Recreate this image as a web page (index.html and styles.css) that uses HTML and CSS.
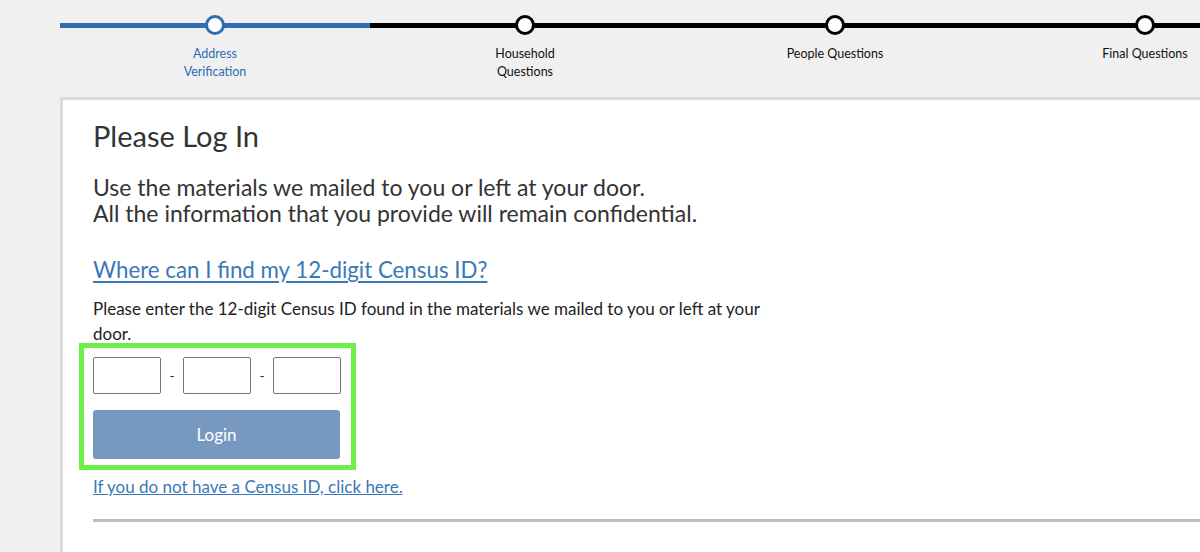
FILE: index.html
```html
<!DOCTYPE html>
<html lang="en">
<head>
<meta charset="utf-8">
<title>Please Log In</title>
<link rel="stylesheet" href="styles.css">
</head>
<body>
<nav class="progress">
  <div class="step done">
    <div class="track"><span class="dot"></span></div>
    <div class="label">Address Verification</div>
  </div>
  <div class="step">
    <div class="track"><span class="dot"></span></div>
    <div class="label">Household Questions</div>
  </div>
  <div class="step">
    <div class="track"><span class="dot"></span></div>
    <div class="label">People Questions</div>
  </div>
  <div class="step">
    <div class="track"><span class="dot"></span></div>
    <div class="label">Final Questions</div>
  </div>
</nav>
<main class="card">
  <h1 class="title">Please Log In</h1>
  <p class="intro">Use the materials we mailed to you or left at your door.<br>All the information that you provide will remain confidential.</p>
  <a class="help-link" href="#">Where can I find my 12-digit Census ID?</a>
  <p class="instructions">Please enter the 12-digit Census ID found in the materials we mailed to you or left at your door.</p>
  <div class="login-box">
    <div class="id-row">
      <input class="id-input" type="text" aria-label="Census ID part 1">
      <span class="dash">-</span>
      <input class="id-input" type="text" aria-label="Census ID part 2">
      <span class="dash">-</span>
      <input class="id-input" type="text" aria-label="Census ID part 3">
    </div>
    <button class="login-btn" type="button">Login</button>
  </div>
  <a class="noid-link" href="#">If you do not have a Census ID, click here.</a>
  <hr class="rule">
</main>
</body>
</html>
```
FILE: styles.css
```css
* { box-sizing: border-box; }
html, body { margin: 0; padding: 0; }
body {
  background: #f0f0f0;
  font-family: Lato, "Open Sans", sans-serif;
  color: #333;
  width: 1200px;
  height: 552px;
  overflow: hidden;
}
.progress {
  display: flex;
  padding-left: 60px;
  padding-top: 14px;
  height: 97px;
  overflow: hidden;
}
.step {
  flex: 0 0 310px;
  display: flex;
  flex-direction: column;
  align-items: center;
}
.track {
  width: 100%;
  height: 22px;
  display: flex;
  align-items: center;
  justify-content: center;
  background: linear-gradient(#000, #000) center / 100% 5px no-repeat;
}
.step.done .track {
  background: linear-gradient(#2e6db4, #2e6db4) center / 100% 5px no-repeat;
}
.dot {
  width: 20px;
  height: 20px;
  border-radius: 50%;
  border: 3px solid #000;
  background: #fff;
}
.step.done .dot { border-color: #2e6db4; }
.label {
  margin-top: 9px;
  max-width: 100px;
  text-align: center;
  font-size: 12.5px;
  line-height: 18px;
  color: #111;
}
.step.done .label { color: #2e6db4; }
.card {
  margin-left: 60px;
  background: #fff;
  border-top: 3px solid #dcdcdc;
  border-left: 3px solid #dcdcdc;
  padding: 18px 0 0 30px;
  height: 460px;
}
.title {
  margin: 0;
  font-size: 29px;
  font-weight: 400;
  line-height: 36px;
  color: #333;
}
.intro {
  margin: 20px 0 0;
  font-size: 23px;
  line-height: 26px;
  color: #333;
}
.help-link {
  display: inline-block;
  margin-top: 29px;
  font-size: 22.3px;
  line-height: 30px;
  color: #3a78b8;
  text-decoration: underline;
  text-underline-offset: 3px;
}
.instructions {
  margin: 11px 0 0;
  width: 690px;
  font-size: 17px;
  line-height: 25px;
  color: #222;
}
.login-box {
  width: 277px;
  margin: -3px 0 0 -14px;
  border: 5px solid #6ef04a;
  padding: 9px 0 6px 9px;
}
.id-row {
  display: flex;
  align-items: center;
}
.id-input {
  width: 68px;
  height: 37px;
  border: 1px solid #777;
  border-radius: 2px;
  background: #fff;
  margin: 0;
}
.dash {
  width: 22px;
  text-align: center;
  font-size: 14px;
  color: #333;
}
.login-btn {
  display: block;
  margin-top: 16px;
  width: 247px;
  height: 49px;
  border: none;
  border-radius: 3px;
  background: #7899bf;
  color: #fff;
  font-family: inherit;
  font-size: 17px;
}
.noid-link {
  display: inline-block;
  margin-top: 5px;
  font-size: 17px;
  line-height: 24px;
  color: #3a78b8;
  text-decoration: underline;
}
.rule {
  margin: 20px 0 0;
  border: none;
  height: 3px;
  background: #bdbdbd;
}
```
